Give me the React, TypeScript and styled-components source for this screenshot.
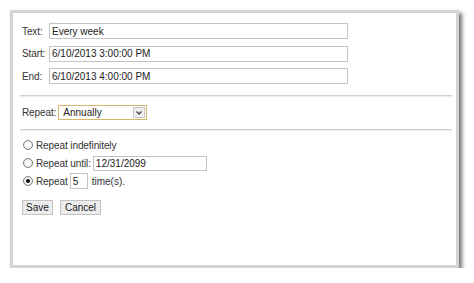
import styled, { createGlobalStyle } from 'styled-components';

const GlobalStyle = createGlobalStyle`
  html, body {
    margin: 0;
    padding: 0;
    background: #ffffff;
  }
  body {
    font-family: "Liberation Sans", Arial, sans-serif;
    font-size: 10px;
    color: #333333;
  }
`;

const Panel = styled.div`
  margin: 10px 0 0 10px;
  width: 449px;
  height: 258px;
  box-sizing: border-box;
  border: 3px solid #d4d4d4;
  box-shadow: 3px 3px 4px rgba(0, 0, 0, 0.55);
  background: #fff;
  padding: 10px 4px 0 7px;
`;

const Fields = styled.div`
  display: flex;
  flex-direction: column;
  gap: 6.5px;
  padding-left: 2px;
`;

const FieldRow = styled.div`
  display: flex;
  align-items: center;
  height: 16px;
`;

const Label = styled.span<{ $width?: number }>`
  display: inline-block;
  width: ${({ $width }) => ($width ? `${$width}px` : 'auto')};
  color: #333;
  white-space: nowrap;
  letter-spacing: -0.1px;
`;

const TextInput = styled.input<{ $width: number; $height?: number }>`
  box-sizing: border-box;
  width: ${({ $width }) => $width}px;
  height: ${({ $height }) => $height || 16}px;
  border: 1px solid #c4c4c4;
  padding: 0 2px;
  margin: 0;
  font-family: "Liberation Sans", Arial, sans-serif;
  font-size: 10px;
  color: #222;
  background: #fff;
  outline: none;
`;

const Divider = styled.div<{ $top: number }>`
  margin-top: ${({ $top }) => $top}px;
  border-top: 1px solid #cfcfcf;
  border-bottom: 1px solid #ececec;
`;

const RepeatRow = styled.div`
  display: flex;
  align-items: center;
  gap: 2px;
  margin-top: 8px;
  padding-left: 2px;
  height: 15px;
`;

const SelectBox = styled.div`
  box-sizing: border-box;
  display: flex;
  align-items: center;
  justify-content: space-between;
  width: 89px;
  height: 15px;
  border: 1px solid #d9b76a;
  padding: 0 1px 0 4px;
  color: #222;
  background: #fff;
`;

const ArrowBox = styled.span`
  box-sizing: border-box;
  display: flex;
  align-items: center;
  justify-content: center;
  width: 12px;
  height: 11px;
  border: 1px solid #c6c6c6;
  background: #f0f0f0;
`;

const Options = styled.div`
  display: flex;
  flex-direction: column;
  gap: 2px;
  margin-top: 6px;
  padding-left: 3px;
`;

const OptionRow = styled.label`
  display: flex;
  align-items: center;
  height: 16px;
  gap: 2px;
`;

const Radio = styled.span<{ $checked?: boolean }>`
  box-sizing: border-box;
  width: 10px;
  height: 10px;
  margin-right: 1px;
  border-radius: 50%;
  border: 1px solid #7a7a7a;
  background: radial-gradient(circle, #fff 0%, #eaeaea 100%);
  display: flex;
  align-items: center;
  justify-content: center;
  &::after {
    content: '';
    display: ${({ $checked }) => ($checked ? 'block' : 'none')};
    width: 4px;
    height: 4px;
    border-radius: 50%;
    background: #111;
  }
`;

const Spaced = styled.span`
  margin-left: 2px;
`;

const Buttons = styled.div`
  display: flex;
  gap: 7px;
  margin-top: 11px;
  padding-left: 2px;
`;

const Button = styled.button<{ $width: number }>`
  box-sizing: border-box;
  width: ${({ $width }) => $width}px;
  height: 15px;
  padding: 0;
  border: 1px solid #c2c2c2;
  background: #ececec;
  font-family: "Liberation Sans", Arial, sans-serif;
  font-size: 10px;
  color: #222;
`;

export default function App() {
  return (
    <>
      <GlobalStyle />
      <Panel>
        <Fields>
          <FieldRow>
            <Label $width={27}>Text:</Label>
            <TextInput $width={299} defaultValue="Every week" />
          </FieldRow>
          <FieldRow>
            <Label $width={27}>Start:</Label>
            <TextInput $width={299} defaultValue="6/10/2013 3:00:00 PM" />
          </FieldRow>
          <FieldRow>
            <Label $width={27}>End:</Label>
            <TextInput $width={299} defaultValue="6/10/2013 4:00:00 PM" />
          </FieldRow>
        </Fields>
        <Divider $top={11} />
        <RepeatRow>
          <Label>Repeat:</Label>
          <SelectBox>
            <span>Annually</span>
            <ArrowBox>
              <svg width="6" height="4" viewBox="0 0 6 4">
                <path d="M0.5 0.5 L3 3 L5.5 0.5" fill="none" stroke="#444" strokeWidth="1.3" />
              </svg>
            </ArrowBox>
          </SelectBox>
        </RepeatRow>
        <Divider $top={9} />
        <Options>
          <OptionRow>
            <Radio />
            <Label>Repeat indefinitely</Label>
          </OptionRow>
          <OptionRow>
            <Radio />
            <Label>Repeat until:</Label>
            <TextInput $width={114} $height={15} defaultValue="12/31/2099" />
          </OptionRow>
          <OptionRow>
            <Radio $checked />
            <Label>Repeat</Label>
            <TextInput $width={18} defaultValue="5" />
            <Spaced>time(s).</Spaced>
          </OptionRow>
        </Options>
        <Buttons>
          <Button $width={31}>Save</Button>
          <Button $width={41}>Cancel</Button>
        </Buttons>
      </Panel>
    </>
  );
}
